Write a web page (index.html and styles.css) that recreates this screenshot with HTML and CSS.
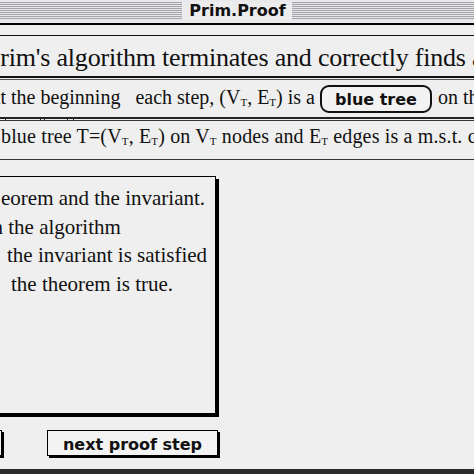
FILE: index.html
```html
<!DOCTYPE html>
<html>
<head>
<meta charset="utf-8">
<title>Prim.Proof</title>
<link rel="stylesheet" href="styles.css">
</head>
<body>
<div class="window">
  <div class="titlebar"><div class="stripes"><span class="title">Prim.Proof</span></div></div>
  <div class="spacer"></div>
  <div class="heading"><span class="heading-text">Prim's algorithm terminates and correctly finds a m.s.t.</span></div>
  <div class="rule-double"></div>
  <div class="row row2">
    <span class="t first">At the beginning</span>
    <span class="t gap">each step, (V<sub>T</sub>, E<sub>T</sub>) is a</span>
    <span class="pill">blue tree</span>
    <span class="t">on the graph.</span>
  </div>
  <div class="rule-ticks"></div>
  <div class="row row3">blue tree T=(V<sub>T</sub>, E<sub>T</sub>) on V<sub>T</sub> nodes and E<sub>T</sub> edges is a m.s.t. containing</div>
  <div class="rule-single"></div>
  <div class="panel">
    <div class="line">eorem and the invariant.</div>
    <div class="line l2">n the algorithm</div>
    <div class="line l3">the invariant is satisfied</div>
    <div class="line l4">the theorem is true.</div>
  </div>
  <div class="buttons">
    <div class="btn btn-prev">previous</div>
    <div class="btn btn-next">next proof step</div>
  </div>
  <div class="footer"></div>
</div>
</body>
</html>
```
FILE: styles.css
```css
html, body {
  margin: 0;
  padding: 0;
}
body {
  width: 474px;
  height: 474px;
  overflow: hidden;
  background: #efefef;
  color: #111;
  font-family: "Liberation Serif", serif;
}
.window {
  width: 474px;
  overflow: hidden;
}
.titlebar {
  height: 25px;
  box-sizing: border-box;
  padding: 2px 0 3px;
  border-bottom: 2px solid #000;
  background: #e9e9ec;
}
.stripes {
  height: 18px;
  background: repeating-linear-gradient(to bottom, #a4a4aa 0 1px, #e6e6ea 1px 2px);
  display: flex;
  justify-content: center;
}
.title {
  background: #ececec;
  padding: 0 6px 0 7px;
  font-family: "DejaVu Sans", sans-serif;
  font-weight: bold;
  font-size: 16px;
  line-height: 18px;
}
.spacer {
  height: 10px;
  border-bottom: 1px solid #111;
}
.heading {
  height: 40px;
  box-sizing: border-box;
  padding-top: 4px;
  font-size: 26px;
  line-height: 36px;
  letter-spacing: -0.2px;
  white-space: nowrap;
}
.heading-text {
  display: inline-block;
  margin-left: -14px;
}
.rule-double {
  height: 1px;
  border-top: 2px solid #111;
  border-bottom: 1px solid #555;
}
.row {
  font-size: 20px;
  white-space: nowrap;
  box-sizing: border-box;
}
.row sub {
  font-size: 11px;
  vertical-align: -2px;
  line-height: 0;
}
.row2 {
  height: 37px;
  padding-top: 1px;
  display: flex;
  align-items: center;
}
.row2 .t {
  line-height: 20px;
  margin-bottom: 4px;
  flex: none;
}
.row2 .first {
  margin-left: -14px;
}
.row2 .gap {
  margin-left: 15px;
}
.pill {
  flex: none;
  box-sizing: border-box;
  width: 112px;
  height: 28px;
  margin: 0 6px 0 5px;
  border: 2px solid #111;
  border-radius: 9px;
  display: flex;
  align-items: center;
  justify-content: center;
  font-family: "DejaVu Sans", sans-serif;
  font-weight: bold;
  font-size: 16px;
  background: #f2f2f2;
}
.rule-ticks {
  height: 1px;
  border-top: 2px solid #222;
  border-bottom: 1px solid #333;
  background:
    linear-gradient(#222, #222) 5px 0 / 1px 100% no-repeat,
    linear-gradient(#222, #222) 40px 0 / 1px 100% no-repeat,
    linear-gradient(#222, #222) 44px 0 / 1px 100% no-repeat,
    linear-gradient(#222, #222) 67px 0 / 1px 100% no-repeat,
    linear-gradient(#222, #222) 73px 0 / 1px 100% no-repeat;
}
.row3 {
  height: 38px;
  padding-top: 3px;
  padding-left: 1px;
  line-height: 24px;
  letter-spacing: 0.15px;
}
.rule-single {
  height: 0;
  border-bottom: 1px solid #333;
}
.panel {
  margin-top: 16px;
  margin-left: -40px;
  width: 256px;
  height: 238px;
  box-sizing: border-box;
  border: 1px solid #000;
  box-shadow: 3px 3px 0 #000;
  padding: 7px 0 0 40px;
  font-size: 21px;
  line-height: 28.5px;
  white-space: nowrap;
}
.line.l2 {
  margin-left: -8.5px;
}
.line.l3 {
  margin-left: 6px;
}
.line.l4 {
  margin-left: 10px;
}
.buttons {
  display: flex;
  margin-top: 16px;
  height: 26px;
}
.btn {
  flex: none;
  box-sizing: border-box;
  height: 26px;
  padding-top: 3px;
  border: 1px solid #000;
  box-shadow: 2px 2px 0 #000;
  background: #f3f3f3;
  display: flex;
  align-items: center;
  justify-content: center;
  font-family: "DejaVu Sans", sans-serif;
  font-weight: bold;
  font-size: 16px;
  white-space: nowrap;
  overflow: hidden;
}
.btn-prev {
  margin-left: -100px;
  width: 102px;
}
.btn-next {
  margin-left: 45px;
  width: 171px;
}
.footer {
  margin-top: 13px;
  height: 10px;
  background: #2b2b2b;
}
```
